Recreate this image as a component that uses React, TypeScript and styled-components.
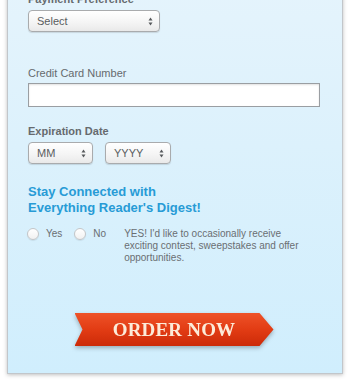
import React from "react";
import styled, { createGlobalStyle } from "styled-components";

const GlobalStyle = createGlobalStyle`
  html, body {
    margin: 0;
    padding: 0;
    background: #ffffff;
    overflow: hidden;
  }
  body {
    font-family: "Liberation Sans", Arial, sans-serif;
  }
`;

const Page = styled.div`
  width: 351px;
  height: 380px;
  overflow: hidden;
`;

const Panel = styled.section`
  margin: -40px 0 0 7px;
  width: 334px;
  padding: 32px 20px 27px 20px;
  box-sizing: content-box;
  width: 294px;
  border: 1px solid #c2c6ca;
  background: linear-gradient(to bottom, #e6f4fc 0%, #dcf1fc 45%, #d0eefd 100%);
  box-shadow: 0 1px 4px rgba(0, 0, 0, 0.25);
`;

const Label = styled.div<{ $bold?: boolean; $top: number }>`
  margin-top: ${(p) => p.$top}px;
  font-size: 11px;
  line-height: 13px;
  color: #666a6e;
  font-weight: ${(p) => (p.$bold ? 700 : 400)};
`;

const SelectBox = styled.div<{ $width: number }>`
  width: ${(p) => p.$width}px;
  height: 22px;
  box-sizing: border-box;
  border: 1px solid #a9abad;
  border-radius: 4px;
  background: linear-gradient(to bottom, #ffffff 0%, #f4f4f4 60%, #e9e9e9 100%);
  box-shadow: 0 1px 1px rgba(0, 0, 0, 0.12);
  display: flex;
  align-items: center;
  justify-content: space-between;
  padding: 0 6px 0 8px;
  font-size: 11px;
  color: #5a5d60;
`;

const FirstSelect = styled.div`
  margin-top: 4px;
`;

const DateRow = styled.div`
  margin-top: 4px;
  display: flex;
  gap: 12px;
`;

const TextInput = styled.div`
  margin-top: 3px;
  width: 292px;
  height: 24px;
  box-sizing: border-box;
  border: 1px solid #9a9ea2;
  background: #ffffff;
  box-shadow: inset 0 1px 2px rgba(0, 0, 0, 0.12);
`;

const Heading = styled.h3`
  margin: 20px 0 0 0;
  font-size: 13px;
  line-height: 16px;
  font-weight: 700;
  color: #279bd6;
`;

const OptRow = styled.div`
  margin-top: 12px;
  display: flex;
  align-items: flex-start;
  font-size: 10px;
  line-height: 12px;
  color: #6a6e72;
`;

const RadioItem = styled.label<{ $gap: number }>`
  display: flex;
  align-items: center;
  gap: 7px;
  margin-right: ${(p) => p.$gap}px;
  height: 12px;
`;

const Radio = styled.span`
  width: 12px;
  height: 12px;
  box-sizing: border-box;
  border-radius: 50%;
  border: 1px solid #c4c6c8;
  background: linear-gradient(to bottom, #ffffff, #f1f1f1);
  box-shadow: 0 1px 1px rgba(0, 0, 0, 0.08);
  margin-left: -1px;
`;

const Consent = styled.p`
  margin: 0;
  width: 178px;
`;

const ButtonWrap = styled.div`
  margin-top: 49px;
  display: flex;
  justify-content: center;
  padding-right: 2px;
  filter: drop-shadow(0 2px 2px rgba(0, 0, 0, 0.28));
`;

const OrderButton = styled.button`
  width: 199px;
  height: 33px;
  border: none;
  padding: 0 0 0 0;
  cursor: pointer;
  clip-path: polygon(0 0, 185px 0, 199px 50%, 185px 100%, 0 100%, 8px 50%);
  background: linear-gradient(to bottom, #ee5228 0%, #e23c14 50%, #cc2a08 100%);
  font-family: "Liberation Serif", "Times New Roman", serif;
  font-weight: 700;
  font-size: 19px;
  letter-spacing: 0.2px;
  color: #fcebd9;
  display: flex;
  align-items: center;
  justify-content: center;
`;

const Arrows = () => (
  <svg width="5" height="9" viewBox="0 0 5 9">
    <path d="M2.5 0.5 L4.5 3.5 L0.5 3.5 Z" fill="#55585b" />
    <path d="M2.5 8.5 L4.5 5.5 L0.5 5.5 Z" fill="#55585b" />
  </svg>
);

const Select = ({ value, width }: { value: string; width: number }) => (
  <SelectBox $width={width}>
    <span>{value}</span>
    <Arrows />
  </SelectBox>
);

export default function App() {
  return (
    <Page>
      <GlobalStyle />
      <Panel>
        <Label $bold $top={0}>
          Payment Preference
        </Label>
        <FirstSelect>
          <Select value="Select" width={132} />
        </FirstSelect>

        <Label $top={35}>Credit Card Number</Label>
        <TextInput />

        <Label $bold $top={18}>
          Expiration Date
        </Label>
        <DateRow>
          <Select value="MM" width={65} />
          <Select value="YYYY" width={66} />
        </DateRow>

        <Heading>
          Stay Connected with
          <br />
          Everything Reader's Digest!
        </Heading>

        <OptRow>
          <RadioItem $gap={13}>
            <Radio />
            Yes
          </RadioItem>
          <RadioItem $gap={18}>
            <Radio />
            No
          </RadioItem>
          <Consent>
            YES! I'd like to occasionally receive exciting contest,
            sweepstakes and offer opportunities.
          </Consent>
        </OptRow>

        <ButtonWrap>
          <OrderButton>ORDER NOW</OrderButton>
        </ButtonWrap>
      </Panel>
    </Page>
  );
}
